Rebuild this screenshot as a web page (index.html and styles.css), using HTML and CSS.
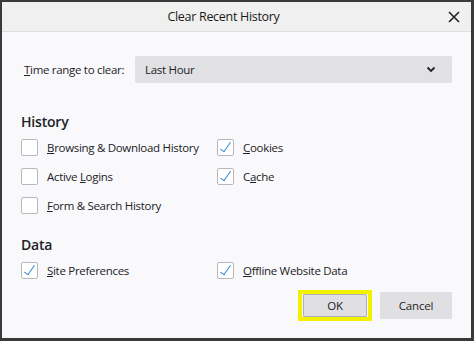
FILE: index.html
```html
<!DOCTYPE html>
<html lang="en">
<head>
  <meta charset="UTF-8" />
  <title>Clear Recent History</title>
  <link rel="stylesheet" href="styles.css">
</head>
<body>
  <div class="dialog">
    <!-- Title bar -->
    <div class="titlebar">
      <span class="title">Clear Recent History</span>
      <span class="close">
        <svg width="12" height="12" viewBox="0 0 12 12"><path d="M1 1 L11 11 M11 1 L1 11" stroke="#222" stroke-width="1.6"/></svg>
      </span>
    </div>

    <div class="content">
      <div class="range-row">
        <span class="range-label"><u>T</u>ime range to clear:</span>
        <div class="select">
          <span>Last Hour</span>
          <svg width="10" height="7" viewBox="0 0 10 7"><path d="M1.5 1.5 L5 5 L8.5 1.5" fill="none" stroke="#222" stroke-width="1.8"/></svg>
        </div>
      </div>

      <h3 class="section">History</h3>
      <div class="grid">
        <label class="item"><span class="box"></span><span><u>B</u>rowsing &amp; Download History</span></label>
        <label class="item"><span class="box checked"></span><span><u>C</u>ookies</span></label>
        <label class="item"><span class="box"></span><span>Active <u>L</u>ogins</span></label>
        <label class="item"><span class="box checked"></span><span>C<u>a</u>che</span></label>
        <label class="item"><span class="box"></span><span><u>F</u>orm &amp; Search History</span></label>
      </div>

      <h3 class="section data">Data</h3>
      <div class="grid">
        <label class="item"><span class="box checked"></span><span><u>S</u>ite Preferences</span></label>
        <label class="item"><span class="box checked"></span><span><u>O</u>ffline Website Data</span></label>
      </div>

      <div class="buttons">
        <span class="highlight"><button class="btn">OK</button></span>
        <button class="btn">Cancel</button>
      </div>
    </div>
  </div>
</body>
</html>
```

FILE: styles.css
```css
/* Page */
body {
  margin: 0;
  font-family: 'Open Sans', 'Noto Sans', sans-serif;
  font-size: 11.5px;
  letter-spacing: -0.3px;
  color: #222226;
}

.dialog {
  width: 474px;
  height: 341px;
  box-sizing: border-box;
  border: 3px solid #3a3a3a;
  border-top-width: 2px;
  border-left-width: 2px;
  background: #f9f9fb;
  display: flex;
  flex-direction: column;
}

/* Title bar */
.titlebar {
  height: 29px;
  background: #f0f0f0;
  border-bottom: 1px solid #dedede;
  display: flex;
  align-items: center;
  justify-content: center;
  position: relative;
}

.title {
  font-size: 12.5px;
  letter-spacing: -0.3px;
  color: #1a1a1a;
  margin-right: 26px;
}

.close {
  position: absolute;
  right: 11px;
  top: 9px;
  display: flex;
}

/* Content */
.content {
  padding: 24px 19px 0 19px;
  display: flex;
  flex-direction: column;
}

.range-row {
  display: flex;
  align-items: center;
}

.range-label {
  padding-left: 3px;
  width: 111px;
}

.select {
  flex: 1;
  height: 27px;
  background: #e1e1e4;
  border-radius: 2px;
  display: flex;
  align-items: center;
  justify-content: space-between;
  padding: 0 16px 0 10px;
}

.section {
  margin: 29px 0 0 0;
  font-size: 14px;
  font-weight: 600;
  letter-spacing: -0.2px;
  line-height: 19px;
}

.section.data {
  margin-top: 15px;
}

.grid {
  display: grid;
  grid-template-columns: 196px 1fr;
  grid-auto-rows: 29px;
  margin-top: 2px;
}

.item {
  display: flex;
  align-items: center;
}

.box {
  width: 15px;
  height: 15px;
  border: 1px solid #b8b8bc;
  background: #fff;
  border-radius: 2px;
  margin-right: 9px;
  position: relative;
}

.box.checked::after {
  content: '';
  position: absolute;
  left: 5px;
  top: 0px;
  width: 4px;
  height: 11px;
  border-right: 1.5px solid #2f86d6;
  border-bottom: 1.5px solid #2f86d6;
  transform: rotate(35deg);
}

/* Buttons */
.buttons {
  display: flex;
  justify-content: flex-end;
  align-items: center;
  gap: 8px;
  margin-top: 5px;
}

.highlight {
  border: 4px solid #f3f000;
  padding: 0 1px;
  display: flex;
}

.btn {
  width: 64px;
  height: 23px;
  background: #e0e0e2;
  border: 1px solid #b0b0b4;
  font-family: inherit;
  font-size: 11.5px;
  letter-spacing: -0.2px;
  color: #222226;
  border-radius: 1px;
}

.buttons > .btn {
  width: 72px;
  height: 27px;
  border-color: #e0e0e2;
}
```
